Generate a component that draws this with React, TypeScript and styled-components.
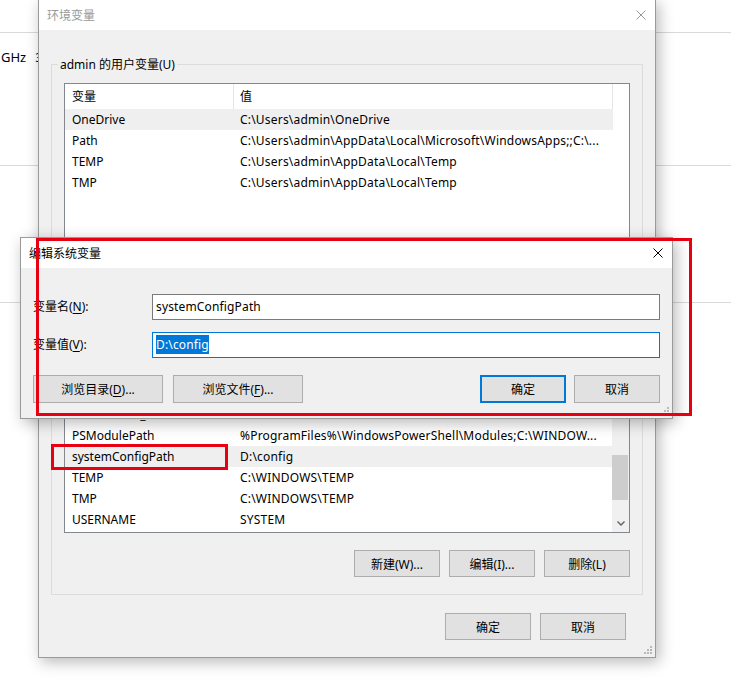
import React from 'react';
import styled, { createGlobalStyle } from 'styled-components';

const GlobalStyle = createGlobalStyle`
  html, body {
    margin: 0;
    padding: 0;
    background: #fff;
  }
  body {
    font-family: "Noto Sans", "Noto Sans CJK SC", sans-serif;
    font-size: 12px;
    color: #000;
  }
`;

const Desktop = styled.div`
  position: relative;
  width: 731px;
  height: 689px;
  overflow: hidden;
  background: #fff;
`;

// the settings page that sits behind the dialogs
const BackWindow = styled.div`
  display: flex;
  flex-direction: column;
`;

const BackBand = styled.div<{ $h: number }>`
  box-sizing: border-box;
  height: ${(p) => p.$h}px;
  border-bottom: 1px solid #d9d9d9;
  display: flex;
  gap: 9px;
  padding: 16px 0 0 1px;
  font-size: 13px;
  line-height: 17px;
`;

const Window = styled.div<{ $left: number; $top: number; $w: number; $h: number }>`
  position: absolute;
  left: ${(p) => p.$left}px;
  top: ${(p) => p.$top}px;
  width: ${(p) => p.$w}px;
  height: ${(p) => p.$h}px;
  box-sizing: border-box;
  border: 1px solid #9a9a9a;
  background: #f0f0f0;
  box-shadow: 3px 4px 14px rgba(0, 0, 0, 0.28);
  display: flex;
  flex-direction: column;
`;

const TitleBar = styled.div<{ $inactive?: boolean }>`
  height: 30px;
  flex: none;
  background: #fff;
  display: flex;
  align-items: center;
  justify-content: space-between;
  padding: 0 9px 0 8px;
  color: ${(p) => (p.$inactive ? '#999' : '#000')};
`;

const CloseIcon = ({ color }: { color: string }) => (
  <svg width="10" height="10" viewBox="0 0 10 10">
    <path d="M0.5 0.5 L9.5 9.5 M9.5 0.5 L0.5 9.5" stroke={color} strokeWidth="1" fill="none" />
  </svg>
);

const Body = styled.div`
  flex: 1;
  display: flex;
  flex-direction: column;
  padding: 0 12px 17px;
`;

const GroupBox = styled.fieldset<{ $mt: number }>`
  margin: ${(p) => p.$mt}px 0 0;
  border: 1px solid #dcdcdc;
  padding: 0 12px 17px;
  min-width: 0;
`;

const Legend = styled.legend`
  padding: 0 2px;
  margin-left: -6px;
  line-height: 17px;
`;

const ListView = styled.div<{ $h: number }>`
  margin-top: 10px;
  height: ${(p) => p.$h}px;
  box-sizing: border-box;
  border: 1px solid #828790;
  background: #fff;
  display: flex;
  flex-direction: column;
  overflow: hidden;
`;

const Header = styled.div`
  display: flex;
  height: 25px;
  flex: none;
`;

const HeaderCell = styled.div<{ $w: number; $pl: number }>`
  box-sizing: border-box;
  width: ${(p) => p.$w}px;
  padding-left: ${(p) => p.$pl}px;
  line-height: 25px;
  border-right: 1px solid #e5e5e5;
`;

const ListBody = styled.div`
  flex: 1;
  display: flex;
  min-height: 0;
`;

const Rows = styled.div<{ $bottom?: boolean }>`
  flex: 1;
  display: flex;
  flex-direction: column;
  justify-content: ${(p) => (p.$bottom ? 'flex-end' : 'flex-start')};
  overflow: hidden;
  padding-bottom: ${(p) => (p.$bottom ? 2 : 0)}px;
`;

const Row = styled.div<{ $selected?: boolean }>`
  display: flex;
  flex: none;
  width: 548px;
  height: 21px;
  line-height: 21px;
  background: ${(p) => (p.$selected ? '#efefef' : 'transparent')};
  white-space: nowrap;
`;

const Cell = styled.div<{ $w: number; $pl: number; $wide?: boolean }>`
  box-sizing: border-box;
  width: ${(p) => p.$w}px;
  padding-left: ${(p) => p.$pl}px;
  letter-spacing: ${(p) => (p.$wide ? '0.2px' : 'normal')};
  overflow: hidden;
`;

const ScrollBar = styled.div`
  width: 17px;
  flex: none;
  background: #f0f0f0;
  display: flex;
  flex-direction: column;
`;

const ScrollArrow = styled.div`
  height: 17px;
  flex: none;
  display: flex;
  align-items: center;
  justify-content: center;
`;

const ScrollTrack = styled.div`
  flex: 1;
  padding: 0 1px 0 0;
`;

const Thumb = styled.div<{ $top: number; $h: number }>`
  margin-top: ${(p) => p.$top}px;
  height: ${(p) => p.$h}px;
  background: #cdcdcd;
`;

const ButtonRow = styled.div<{ $mt: number; $gap: number; $pr?: number }>`
  display: flex;
  justify-content: flex-end;
  gap: ${(p) => p.$gap}px;
  margin-top: ${(p) => p.$mt}px;
  padding-right: ${(p) => p.$pr ?? 0}px;
`;

const Button = styled.div<{ $w: number; $h?: number; $default?: boolean }>`
  box-sizing: border-box;
  width: ${(p) => p.$w}px;
  height: ${(p) => p.$h ?? 27}px;
  background: #e1e1e1;
  border: ${(p) => (p.$default ? '2px solid #0078d7' : '1px solid #adadad')};
  display: flex;
  align-items: center;
  justify-content: center;
`;

const U = styled.span`
  text-decoration: underline;
  text-underline-offset: 2px;
`;

const EditBody = styled.div`
  flex: 1;
  display: flex;
  flex-direction: column;
  padding: 26px 12px 14px;
`;

const FieldRow = styled.div<{ $mt?: number }>`
  display: flex;
  align-items: center;
  margin-top: ${(p) => p.$mt ?? 0}px;
`;

const FieldLabel = styled.div`
  width: 119px;
  flex: none;
  line-height: 18px;
  padding-bottom: 1px;
`;

const TextBox = styled.div<{ $focused?: boolean }>`
  flex: 1;
  box-sizing: border-box;
  height: 26px;
  border: 1px solid ${(p) => (p.$focused ? '#0078d7' : '#7a7a7a')};
  background: #fff;
  padding: 0 3px 1px;
  display: flex;
  align-items: center;
  white-space: nowrap;
  letter-spacing: 0.15px;
`;

const Selection = styled.span`
  background: #0078d7;
  color: #fff;
  line-height: 19px;
`;

const EditButtons = styled.div`
  display: flex;
  justify-content: space-between;
  margin-top: 17px;
`;

const ButtonGroup = styled.div<{ $gap: number }>`
  display: flex;
  gap: ${(p) => p.$gap}px;
`;

const Grip = styled.svg`
  position: absolute;
  right: 3px;
  bottom: 3px;
`;

const Annotation = styled.div<{ $left: number; $top: number; $w: number; $h: number }>`
  position: absolute;
  left: ${(p) => p.$left}px;
  top: ${(p) => p.$top}px;
  width: ${(p) => p.$w}px;
  height: ${(p) => p.$h}px;
  box-sizing: border-box;
  border: 3px solid #e60012;
`;

const ResizeGrip = () => (
  <Grip width="8" height="8" viewBox="0 0 8 8">
    <rect x="6" y="0" width="2" height="2" fill="#b9b9b9" />
    <rect x="3" y="3" width="2" height="2" fill="#b9b9b9" />
    <rect x="6" y="3" width="2" height="2" fill="#b9b9b9" />
    <rect x="0" y="6" width="2" height="2" fill="#b9b9b9" />
    <rect x="3" y="6" width="2" height="2" fill="#b9b9b9" />
    <rect x="6" y="6" width="2" height="2" fill="#b9b9b9" />
  </Grip>
);

type Variable = { name: string; value: string; selected?: boolean };

const userVars: Variable[] = [
  { name: 'OneDrive', value: 'C:\\Users\\admin\\OneDrive', selected: true },
  { name: 'Path', value: 'C:\\Users\\admin\\AppData\\Local\\Microsoft\\WindowsApps;;C:\\...' },
  { name: 'TEMP', value: 'C:\\Users\\admin\\AppData\\Local\\Temp' },
  { name: 'TMP', value: 'C:\\Users\\admin\\AppData\\Local\\Temp' },
];

// rows further up the scrolled list sit behind the edit dialog
const systemVars: Variable[] = [
  { name: 'PROCESSOR_REVISION', value: '9e0a' },
  { name: 'PSModulePath', value: '%ProgramFiles%\\WindowsPowerShell\\Modules;C:\\WINDOW...' },
  { name: 'systemConfigPath', value: 'D:\\config', selected: true },
  { name: 'TEMP', value: 'C:\\WINDOWS\\TEMP' },
  { name: 'TMP', value: 'C:\\WINDOWS\\TEMP' },
  { name: 'USERNAME', value: 'SYSTEM' },
];

const VarRow = ({ v }: { v: Variable }) => (
  <Row $selected={v.selected}>
    <Cell $w={169} $pl={7}>{v.name}</Cell>
    <Cell $w={379} $pl={6} $wide>
      {v.value}
    </Cell>
  </Row>
);

const ListHeader = () => (
  <Header>
    <HeaderCell $w={169} $pl={7}>变量</HeaderCell>
    <HeaderCell $w={379} $pl={6}>值</HeaderCell>
  </Header>
);

const ChevronUp = () => (
  <svg width="8" height="5" viewBox="0 0 8 5">
    <path d="M0.5 4.5 L4 1 L7.5 4.5" stroke="#606060" strokeWidth="1.4" fill="none" />
  </svg>
);

const ChevronDown = () => (
  <svg width="8" height="5" viewBox="0 0 8 5">
    <path d="M0.5 0.5 L4 4 L7.5 0.5" stroke="#606060" strokeWidth="1.4" fill="none" />
  </svg>
);

export default function App() {
  return (
    <Desktop>
      <GlobalStyle />
      <BackWindow>
        <BackBand $h={33} />
        <BackBand $h={133}>
          <span>GHz</span>
          <span>3</span>
        </BackBand>
        <BackBand $h={137} />
      </BackWindow>

      <Window $left={38} $top={-1} $w={618} $h={659}>
        <TitleBar $inactive>
          <span>环境变量</span>
          <CloseIcon color="#999" />
        </TitleBar>
        <Body>
          <GroupBox $mt={26}>
            <Legend>admin 的用户变量(U)</Legend>
            <ListView $h={168}>
              <ListHeader />
              <ListBody>
                <Rows>
                  {userVars.map((v) => (
                    <VarRow key={v.name} v={v} />
                  ))}
                </Rows>
              </ListBody>
            </ListView>
            <ButtonRow $mt={17} $gap={9}>
              <Button $w={86}>新建(N)...</Button>
              <Button $w={86}>编辑(E)...</Button>
              <Button $w={86}>删除(D)</Button>
            </ButtonRow>
          </GroupBox>

          <GroupBox $mt={12}>
            <Legend>系统变量(S)</Legend>
            <ListView $h={181}>
              <ListHeader />
              <ListBody>
                <Rows $bottom>
                  {systemVars.map((v) => (
                    <VarRow key={v.name} v={v} />
                  ))}
                </Rows>
                <ScrollBar>
                  <ScrollArrow>
                    <ChevronUp />
                  </ScrollArrow>
                  <ScrollTrack>
                    <Thumb $top={60} $h={45} />
                  </ScrollTrack>
                  <ScrollArrow>
                    <ChevronDown />
                  </ScrollArrow>
                </ScrollBar>
              </ListBody>
            </ListView>
            <ButtonRow $mt={17} $gap={9}>
              <Button $w={86}>新建(W)...</Button>
              <Button $w={86}>编辑(I)...</Button>
              <Button $w={86}>删除(L)</Button>
            </ButtonRow>
          </GroupBox>

          <ButtonRow $mt={18} $gap={9} $pr={17}>
            <Button $w={86}>确定</Button>
            <Button $w={86}>取消</Button>
          </ButtonRow>
        </Body>
        <ResizeGrip />
      </Window>

      <Window $left={20} $top={237} $w={653} $h={182}>
        <TitleBar>
          <span>编辑系统变量</span>
          <CloseIcon color="#000" />
        </TitleBar>
        <EditBody>
          <FieldRow>
            <FieldLabel>
              变量名(<U>N</U>):
            </FieldLabel>
            <TextBox>systemConfigPath</TextBox>
          </FieldRow>
          <FieldRow $mt={12}>
            <FieldLabel>
              变量值(<U>V</U>):
            </FieldLabel>
            <TextBox $focused>
              <Selection>D:\config</Selection>
            </TextBox>
          </FieldRow>
          <EditButtons>
            <ButtonGroup $gap={10}>
              <Button $w={130} $h={28}>
                浏览目录(<U>D</U>)...
              </Button>
              <Button $w={130} $h={28}>
                浏览文件(<U>F</U>)...
              </Button>
            </ButtonGroup>
            <ButtonGroup $gap={8}>
              <Button $w={86} $h={28} $default>
                确定
              </Button>
              <Button $w={86} $h={28}>
                取消
              </Button>
            </ButtonGroup>
          </EditButtons>
        </EditBody>
        <ResizeGrip />
      </Window>

      <Annotation $left={36} $top={238} $w={656} $h={178} />
      <Annotation $left={51} $top={444} $w={177} $h={26} />
    </Desktop>
  );
}
